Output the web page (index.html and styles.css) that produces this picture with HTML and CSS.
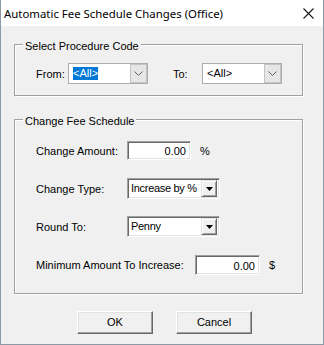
FILE: index.html
```html
<!DOCTYPE html>
<html>
<head>
<meta charset="utf-8">
<link rel="stylesheet" href="styles.css">
</head>
<body>
<div class="window">
  <div class="titlebar">
    <span class="title">Automatic Fee Schedule Changes (Office)</span>
    <svg class="close" width="11" height="11" viewBox="0 0 11 11"><path d="M0.5 0.5 L10.5 10.5 M10.5 0.5 L0.5 10.5" stroke="#1a1a1a" stroke-width="1.1" fill="none"/></svg>
  </div>
  <div class="client">
    <div class="group g1">
      <div class="legend">Select Procedure Code</div>
      <div class="prow">
        <span class="lbl lbl-from">From:</span>
        <div class="combo"><span class="ctext"><span class="hl">&lt;All&gt;</span></span><span class="cbtn"><svg width="9" height="5" viewBox="0 0 9 5"><path d="M0.5 0.5 L4.5 4.5 L8.5 0.5" stroke="#606060" fill="none"/></svg></span></div>
        <span class="lbl lbl-to">To:</span>
        <div class="combo"><span class="ctext">&lt;All&gt;</span><span class="cbtn"><svg width="9" height="5" viewBox="0 0 9 5"><path d="M0.5 0.5 L4.5 4.5 L8.5 0.5" stroke="#606060" fill="none"/></svg></span></div>
      </div>
    </div>
    <div class="group g2">
      <div class="legend">Change Fee Schedule</div>
      <div class="frow r1">
        <span class="flbl">Change Amount:</span>
        <div class="tbox">0.00</div>
        <span class="unit">%</span>
      </div>
      <div class="frow r2">
        <span class="flbl">Change Type:</span>
        <div class="dsel"><span class="dtext">Increase by %</span><span class="dbtn"><svg width="7" height="4" viewBox="0 0 7 4"><path d="M0 0 H7 L3.5 4 Z" fill="#000"/></svg></span></div>
      </div>
      <div class="frow r3">
        <span class="flbl">Round To:</span>
        <div class="dsel"><span class="dtext">Penny</span><span class="dbtn"><svg width="7" height="4" viewBox="0 0 7 4"><path d="M0 0 H7 L3.5 4 Z" fill="#000"/></svg></span></div>
      </div>
      <div class="frow r4">
        <span class="flbl wide">Minimum Amount To Increase:</span>
        <div class="tbox">0.00</div>
        <span class="unit">$</span>
      </div>
    </div>
    <div class="buttons">
      <div class="btn ok">OK</div>
      <div class="btn cancel">Cancel</div>
    </div>
  </div>
</div>
</body>
</html>
```
FILE: styles.css
```css
html, body {
  margin: 0;
  padding: 0;
  background: #f0f0f0;
}
.window {
  width: 324px;
  height: 345px;
  box-sizing: border-box;
  border: 1px solid #8c9aa5;
  border-top: none;
  display: flex;
  flex-direction: column;
  font-family: "Liberation Sans", Arial, sans-serif;
  font-size: 11px;
  color: #000;
}
.titlebar {
  height: 26px;
  flex: none;
  background: #fff;
  display: flex;
  align-items: center;
  padding-left: 3px;
}
.title {
  font-family: "Noto Sans", "Open Sans", sans-serif;
  font-size: 11.4px;
  color: #000;
  line-height: 16px;
  margin-top: 1px;
}
.close {
  margin-left: auto;
  margin-right: 9px;
  margin-top: 1px;
}
.client {
  flex: 1;
  background: #f0f0f0;
  padding: 18px 0 0 13px;
}
.group {
  width: 289px;
  box-sizing: border-box;
  border: 1px solid #a0a0a0;
  box-shadow: inset 1px 1px 0 #fff, 1px 1px 0 #fff;
  display: flex;
  flex-direction: column;
}
.g1 { height: 52px; }
.g2 { height: 175px; margin-top: 23px; }
.legend {
  align-self: flex-start;
  margin: -5px 0 0 8px;
  padding: 0 2px;
  line-height: 13px;
  background: #f0f0f0;
}
.prow {
  display: flex;
  align-items: center;
  margin-top: 10px;
  padding-left: 21px;
  height: 21px;
}
.lbl-from { width: 32px; }
.lbl-to { width: 29px; margin-left: 25px; }
.combo {
  width: 80px;
  height: 21px;
  box-sizing: border-box;
  border: 1px solid #acacac;
  background: #fff;
  display: flex;
  align-items: center;
}
.ctext {
  flex: 1;
  padding-left: 4px;
  line-height: 13px;
}
.hl {
  background: #0078d7;
  color: #fff;
  display: inline-block;
  line-height: 13px;
}
.cbtn {
  width: 17px;
  height: 19px;
  box-sizing: border-box;
  border: 1px solid #c3c3c3;
  background: #e6e6e6;
  display: flex;
  align-items: center;
  justify-content: center;
}
.frow {
  display: flex;
  align-items: center;
  padding-left: 21px;
}
.r1 { margin-top: 13px; height: 19px; }
.r2 { margin-top: 18px; height: 21px; }
.r3 { margin-top: 17px; height: 21px; }
.r4 { margin-top: 18px; height: 20px; }
.flbl { width: 91px; }
.flbl.wide { width: 159px; }
.tbox {
  width: 64px;
  height: 19px;
  box-sizing: border-box;
  background: #fff;
  border-top: 1px solid #a0a0a0;
  border-left: 1px solid #a0a0a0;
  border-right: 1px solid #fff;
  border-bottom: 1px solid #fff;
  box-shadow: inset 1px 1px 0 #696969, inset -1px -1px 0 #e3e3e3;
  text-align: right;
  padding: 2px 4px 0 0;
  line-height: 14px;
}
.r4 .tbox { width: 65px; height: 20px; padding-top: 3px; }
.unit { margin-left: 9px; }
.dsel {
  width: 93px;
  height: 21px;
  box-sizing: border-box;
  background: #fff;
  border-top: 1px solid #a0a0a0;
  border-left: 1px solid #a0a0a0;
  border-right: 1px solid #fff;
  border-bottom: 1px solid #fff;
  box-shadow: inset 1px 1px 0 #696969, inset -1px -1px 0 #e3e3e3;
  display: flex;
  align-items: center;
  padding: 2px;
}
.dtext {
  flex: 1;
  min-width: 0;
  padding-left: 1px;
  line-height: 13px;
  white-space: nowrap;
  overflow: hidden;
  letter-spacing: -0.3px;
}
.dbtn {
  flex: none;
  width: 16px;
  height: 17px;
  box-sizing: border-box;
  background: #f0f0f0;
  border-top: 1px solid #e3e3e3;
  border-left: 1px solid #e3e3e3;
  border-right: 1px solid #696969;
  border-bottom: 1px solid #696969;
  box-shadow: inset 1px 1px 0 #fff, inset -1px -1px 0 #a0a0a0;
  display: flex;
  align-items: center;
  justify-content: center;
}
.buttons {
  display: flex;
  margin-top: 17px;
  padding-left: 63px;
}
.btn {
  width: 76px;
  height: 23px;
  box-sizing: border-box;
  background: #f0f0f0;
  border-top: 1px solid #fff;
  border-left: 1px solid #fff;
  border-right: 1px solid #696969;
  border-bottom: 1px solid #696969;
  box-shadow: inset -1px -1px 0 #a0a0a0, inset 1px 1px 0 #e3e3e3;
  display: flex;
  align-items: center;
  justify-content: center;
  font-size: 11px;
  line-height: 13px;
}
.btn.cancel { margin-left: 23px; }
```
